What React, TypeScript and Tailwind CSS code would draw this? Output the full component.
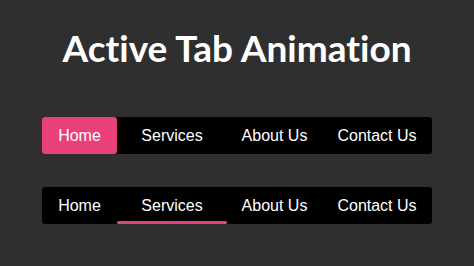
const tabs = [
  { label: "Home", w: "w-[75px]" },
  { label: "Services", w: "w-[110px]" },
  { label: "About Us", w: "w-[95px]" },
  { label: "Contact Us", w: "w-[110px]" },
];

function NavPill({ active }: { active: number }) {
  return (
    <nav className="flex h-[37px] w-[390px] rounded-[3px] bg-black">
      {tabs.map((t, i) => (
        <div
          key={t.label}
          className={`${t.w} flex items-center justify-center rounded-[3px] text-[16px] text-white ${
            i === active ? "bg-[#ea407a]" : ""
          }`}
        >
          {t.label}
        </div>
      ))}
    </nav>
  );
}

function NavUnderline({ active }: { active: number }) {
  return (
    <nav className="flex h-[37px] w-[390px] rounded-[3px] bg-black">
      {tabs.map((t, i) => (
        <div key={t.label} className={`${t.w} relative flex items-center justify-center text-[16px] text-white`}>
          {t.label}
          {i === active && (
            <span className="absolute bottom-[0px] left-0 right-0 h-[3px] rounded-full bg-[#e2457a]" />
          )}
        </div>
      ))}
    </nav>
  );
}

export default function App() {
  return (
    <div
      className="flex h-[266px] w-[474px] flex-col items-center bg-[#2f2f2f]"
      style={{ fontFamily: '"Liberation Sans", Arial, sans-serif' }}
    >
      <h1
        className="mt-[24px] text-[37px] font-bold leading-[48px] text-white [font-variant-ligatures:none]"
        style={{ fontFamily: 'Lato, "Open Sans", sans-serif' }}
      >
        Active Tab Animation
      </h1>
      <div className="mt-[45px]">
        <NavPill active={0} />
      </div>
      <div className="mt-[33px]">
        <NavUnderline active={1} />
      </div>
    </div>
  );
}
